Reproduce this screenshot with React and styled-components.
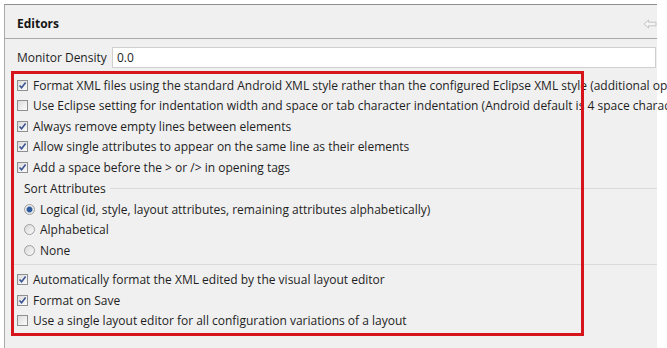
import styled, { createGlobalStyle } from 'styled-components';

const GlobalStyle = createGlobalStyle`
  html, body {
    margin: 0;
    padding: 0;
    background: #fff;
    overflow: hidden;
  }
  body {
    font-family: "Open Sans", "Noto Sans", sans-serif;
    font-size: 12px;
    color: #1e1e1e;
  }
`;

const topChecks = [
  { on: true, text: 'Format XML files using the standard Android XML style rather than the configured Eclipse XML style (additional options)' },
  { on: false, text: 'Use Eclipse setting for indentation width and space or tab character indentation (Android default is 4 space characters)' },
  { on: true, text: 'Always remove empty lines between elements' },
  { on: true, text: 'Allow single attributes to appear on the same line as their elements' },
  { on: true, text: 'Add a space before the > or /> in opening tags' },
];

const radios = [
  { on: true, text: 'Logical (id, style, layout attributes, remaining attributes alphabetically)' },
  { on: false, text: 'Alphabetical' },
  { on: false, text: 'None' },
];

const bottomChecks = [
  { on: true, text: 'Automatically format the XML edited by the visual layout editor' },
  { on: true, text: 'Format on Save' },
  { on: false, text: 'Use a single layout editor for all configuration variations of a layout' },
];

const CheckRow = ({ on, text }) => (
  <Row>
    <Box>
      {on && (
        <svg width="9" height="9" viewBox="0 0 9 9">
          <path d="M1.5 4.5 L3.6 6.8 L7.6 1.6" fill="none" stroke="#3b5494" strokeWidth="1.6" />
        </svg>
      )}
    </Box>
    <Label>{text}</Label>
  </Row>
);

const RadioRow = ({ on, text }) => (
  <Row $indent>
    <Radio $on={on} />
    <Label>{text}</Label>
  </Row>
);

const App = () => {
  return (
    <>
      <GlobalStyle />
      <Panel>
        <Header>
          <Title>Editors</Title>
          <BackIcon width="14" height="10" viewBox="0 0 14 10">
            <path d="M1 5 L5.5 1 V3.2 H13 V6.8 H5.5 V9 Z" fill="#f4f4f4" stroke="#c4c4c4" strokeWidth="1" />
          </BackIcon>
        </Header>
        <DensityRow>
          <span>Monitor Density</span>
          <Input>0.0</Input>
        </DensityRow>
        <Body>
          {topChecks.map((c) => (
            <CheckRow key={c.text} {...c} />
          ))}
          <GroupTitle>
            <span>Sort Attributes</span>
            <Rule />
          </GroupTitle>
          {radios.map((r) => (
            <RadioRow key={r.text} {...r} />
          ))}
          <Separator />
          {bottomChecks.map((c) => (
            <CheckRow key={c.text} {...c} />
          ))}
          <Highlight />
        </Body>
      </Panel>
    </>
  );
};

export default App;

const Panel = styled.div`
  margin: 4px 0 0 4px;
  width: 653px;
  height: 344px;
  background: #f0f0f0;
  border-top: 1px solid #8f8f8f;
  border-left: 1px solid #a9a9a9;
  box-sizing: border-box;
`;

const Header = styled.div`
  height: 34px;
  display: flex;
  align-items: center;
  justify-content: space-between;
  padding: 4px 0 0 12px;
  box-sizing: border-box;
  border-bottom: 1px solid #a8a8a8;
`;

const Title = styled.div`
  font-weight: bold;
  font-size: 12px;
  color: #151515;
`;

const BackIcon = styled.svg`
  margin-right: 0;
`;

const DensityRow = styled.div`
  display: flex;
  align-items: center;
  height: 22px;
  margin-top: 7px;
  padding-left: 12px;

  span {
    width: 95px;
    white-space: nowrap;
  }
`;

const Input = styled.div`
  flex: 1;
  height: 21px;
  margin-right: 1px;
  background: #fff;
  border: 1px solid #cfcfcf;
  box-sizing: border-box;
  padding-left: 4px;
  line-height: 19px;
`;

const Body = styled.div`
  position: relative;
  margin-top: 5px;
  padding-top: 2px;
`;

const Row = styled.div`
  display: flex;
  align-items: center;
  height: 20.5px;
  padding-left: ${(p) => (p.$indent ? '19px' : '12px')};
  white-space: nowrap;
`;

const Box = styled.div`
  width: 11px;
  height: 11px;
  box-sizing: border-box;
  border: 1px solid #8e8f8f;
  background: linear-gradient(135deg, #dcdcdc, #fbfbfb);
  display: flex;
  align-items: center;
  justify-content: center;
  margin-right: 5px;
  flex-shrink: 0;
`;

const Radio = styled.div`
  width: 11px;
  height: 11px;
  border-radius: 50%;
  box-sizing: border-box;
  border: 1px solid #a0a0a0;
  background: ${(p) =>
    p.$on
      ? 'radial-gradient(circle, #2c5a9c 0 2.4px, #9bb3d4 3px, #e8e8e8 3.6px)'
      : 'linear-gradient(135deg, #d8d8d8, #fafafa)'};
  margin-right: 5px;
  flex-shrink: 0;
`;

const Label = styled.span`
  color: #1e1e1e;
`;

const GroupTitle = styled.div`
  display: flex;
  align-items: center;
  height: 21.5px;
  padding-left: 19px;

  span {
    margin-right: 4px;
    white-space: nowrap;
  }
`;

const Rule = styled.div`
  flex: 1;
  height: 1px;
  background: #dadada;
`;

const Separator = styled.div`
  height: 1px;
  background: #dadada;
  margin: 3px 0 5px 9px;
`;

const Highlight = styled.div`
  position: absolute;
  left: 6px;
  top: -2px;
  width: 573px;
  height: 265px;
  border: 3px solid #d6141c;
  box-sizing: border-box;
  pointer-events: none;
`;
